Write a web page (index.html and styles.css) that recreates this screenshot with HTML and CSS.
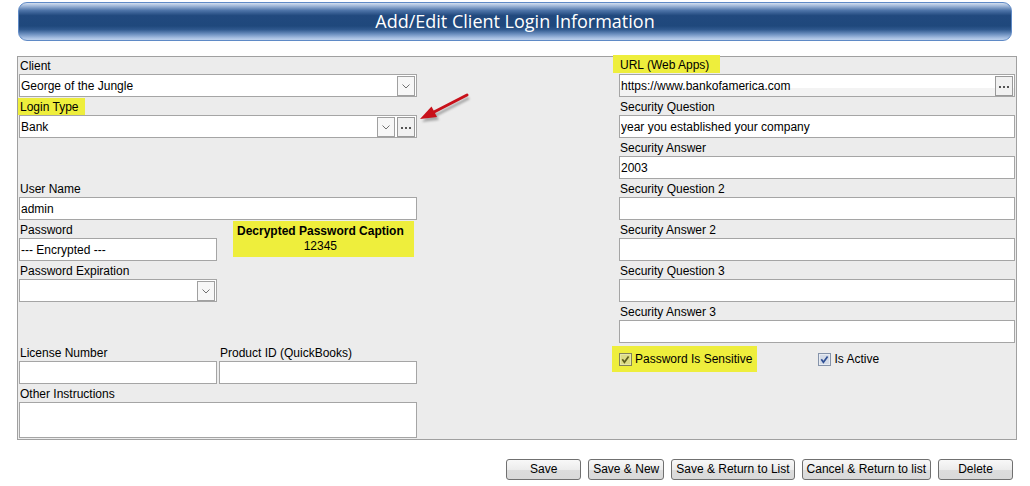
FILE: index.html
```html
<!DOCTYPE html>
<html>
<head>
<meta charset="utf-8">
<title>Add/Edit Client Login Information</title>
<link rel="stylesheet" href="styles.css">
</head>
<body>
<div class="header"><h1 class="title">Add/Edit Client Login Information</h1></div>
<div class="panel">
  <div class="col">
    <div class="field">
      <div class="label">Client</div>
      <div class="box"><span class="val">George of the Jungle</span><span class="dd"><svg width="16" height="18" viewBox="0 0 16 18"><path d="M4.5 7.5 L8 11 L11.5 7.5" fill="none" stroke="#707070" stroke-width="1"/></svg></span></div>
    </div>
    <div class="field">
      <div class="label hl-row"><span class="hl hl-login">Login Type</span></div>
      <div class="box"><span class="val">Bank</span><span class="dd"><svg width="16" height="18" viewBox="0 0 16 18"><path d="M4.5 7.5 L8 11 L11.5 7.5" fill="none" stroke="#707070" stroke-width="1"/></svg></span><span class="ell"><svg width="16" height="18" viewBox="0 0 16 18"><rect x="3" y="9" width="2" height="2" fill="#555"/><rect x="7" y="9" width="2" height="2" fill="#555"/><rect x="11" y="9" width="2" height="2" fill="#555"/></svg></span></div>
    </div>
    <div class="field"></div>
    <div class="field">
      <div class="label">User Name</div>
      <div class="box"><span class="val">admin</span></div>
    </div>
    <div class="field split">
      <div class="half">
        <div class="label">Password</div>
        <div class="box"><span class="val">--- Encrypted ---</span></div>
      </div>
      <div class="caption">
        <div class="cap-inner"><div class="cap-title">Decrypted Password Caption</div><div>12345</div></div>
      </div>
    </div>
    <div class="field split">
      <div class="half">
        <div class="label">Password Expiration</div>
        <div class="box"><span class="val"></span><span class="dd"><svg width="16" height="18" viewBox="0 0 16 18"><path d="M4.5 7.5 L8 11 L11.5 7.5" fill="none" stroke="#707070" stroke-width="1"/></svg></span></div>
      </div>
    </div>
    <div class="field"></div>
    <div class="field split gap2">
      <div class="half">
        <div class="label">License Number</div>
        <div class="box"></div>
      </div>
      <div class="half">
        <div class="label">Product ID (QuickBooks)</div>
        <div class="box"></div>
      </div>
    </div>
    <div class="field tall">
      <div class="label">Other Instructions</div>
      <div class="box area"></div>
    </div>
  </div>

  <div class="col">
    <div class="field">
      <div class="label hl-row"><span class="hl hl-url">URL (Web Apps)</span></div>
      <div class="box url"><span class="val">https://www.bankofamerica.com</span><span class="ell"><svg width="16" height="18" viewBox="0 0 16 18"><rect x="3" y="9" width="2" height="2" fill="#555"/><rect x="7" y="9" width="2" height="2" fill="#555"/><rect x="11" y="9" width="2" height="2" fill="#555"/></svg></span></div>
    </div>
    <div class="field">
      <div class="label">Security Question</div>
      <div class="box"><span class="val">year you established your company</span></div>
    </div>
    <div class="field">
      <div class="label">Security Answer</div>
      <div class="box"><span class="val">2003</span></div>
    </div>
    <div class="field">
      <div class="label">Security Question 2</div>
      <div class="box"></div>
    </div>
    <div class="field">
      <div class="label">Security Answer 2</div>
      <div class="box"></div>
    </div>
    <div class="field">
      <div class="label">Security Question 3</div>
      <div class="box"></div>
    </div>
    <div class="field">
      <div class="label">Security Answer 3</div>
      <div class="box"></div>
    </div>
    <div class="checks">
      <span class="check hl-check">
        <svg width="13" height="13" viewBox="0 0 13 13"><rect x="0.5" y="0.5" width="12" height="12" fill="#e6e6a6" stroke="#82825a"/><rect x="2" y="2" width="9" height="9" fill="#dcdc86"/><path d="M3.3 6.3 L5.4 9.2 L9.6 3.4" fill="none" stroke="#5c5c1e" stroke-width="1.7"/></svg>
        <span>Password Is Sensitive</span>
      </span>
      <span class="check active">
        <svg width="13" height="13" viewBox="0 0 13 13"><rect x="0.5" y="0.5" width="12" height="12" fill="#e7ebf2" stroke="#8593aa"/><rect x="2" y="2" width="9" height="9" fill="#d4dbe7"/><path d="M3.3 6.3 L5.4 9.2 L9.6 3.4" fill="none" stroke="#2f4f94" stroke-width="1.7"/></svg>
        <span>Is Active</span>
      </span>
    </div>
  </div>

  <svg class="arrow" width="75" height="45" viewBox="0 0 75 45">
    <defs><filter id="blur" x="-20%" y="-20%" width="140%" height="140%"><feGaussianBlur stdDeviation="1.2"/></filter></defs>
    <g filter="url(#blur)" opacity="0.45" transform="translate(2,3)">
      <path d="M49 8 L16 25" stroke="#555" stroke-width="3" fill="none"/>
      <path d="M2 32 L19 30 L13.5 19.4 Z" fill="#555"/>
    </g>
    <path d="M49 8 L16 25" stroke="#c8101a" stroke-width="3" stroke-linecap="round" fill="none"/>
    <path d="M2 32 L19 30 L13.5 19.4 Z" fill="#c8101a"/>
  </svg>
</div>
<div class="buttons">
  <button class="btn">Save</button>
  <button class="btn">Save &amp; New</button>
  <button class="btn">Save &amp; Return to List</button>
  <button class="btn">Cancel &amp; Return to list</button>
  <button class="btn">Delete</button>
</div>
</body>
</html>
```
FILE: styles.css
```css
* { box-sizing: border-box; }
html, body { margin: 0; padding: 0; background: #fff; }
body {
  width: 1030px;
  height: 486px;
  overflow: hidden;
  font-family: "Liberation Sans", Arial, sans-serif;
  font-size: 12px;
  color: #000;
}

.header {
  margin: 2px 0 0 18px;
  width: 994px;
  height: 39px;
  border: 1px solid #5f8ac6;
  border-radius: 9px;
  background: linear-gradient(to bottom,
    #d3dfef 0%, #9fb7d8 8%, #4e74a8 20%, #21497e 34%,
    #1f487c 62%, #30598e 72%, #6c8fbf 84%, #a9c1e3 95%, #bcd0ec 100%);
  display: flex;
  align-items: center;
  justify-content: center;
}
.title {
  margin: -2px 0 0 0;
  font-family: "Open Sans", "Liberation Sans", sans-serif;
  font-weight: normal;
  font-size: 18px;
  color: #fff;
  line-height: 1;
}

.panel {
  position: relative;
  margin: 15px 0 0 17px;
  width: 1000px;
  height: 384px;
  border: 1px solid #a0a0a0;
  background: #ececec;
  padding-left: 1px;
  display: grid;
  grid-template-columns: 398px 396px;
  column-gap: 202px;
  align-content: start;
}
.col { display: flex; flex-direction: column; }
.field { height: 41px; }
.field.tall { height: 53px; }
.split { display: flex; align-items: flex-start; }
.gap2 { gap: 2px; }
.half { width: 198px; }

.label {
  height: 17px;
  line-height: 17px;
  padding: 1px 0 0 1px;
  white-space: nowrap;
}
.label.hl-row { padding-top: 0; }
.hl { background: #eeee3c; display: inline-block; }
.hl-login { margin-left: -2px; padding: 0 6px 0 2px; height: 17px; line-height: 18px; }
.hl-url { margin-left: -7px; margin-top: -2px; padding: 0 11px 0 7px; height: 18px; line-height: 20px; }

.box {
  height: 23px;
  background: #fff;
  border: 1px solid #a5a5a5;
  display: flex;
  align-items: center;
  padding-left: 1px;
}
.box.area { height: 36px; }
.box.url { background: linear-gradient(to bottom, #fff 0%, #fff 62%, #f3f3f3 63%, #f3f3f3 100%); }
.val { flex: 1; white-space: nowrap; overflow: hidden; }
.dd, .ell {
  width: 18px;
  height: 20px;
  border: 1px solid #a0a0a0;
  background: #f7f7f7;
  display: flex;
  align-items: center;
  justify-content: center;
  margin-right: 1px;
}
.dd + .ell { margin-left: 1px; }
.ell { background: #f1f1f1; border-color: #999; }

.caption {
  margin-left: 16px;
  width: 181px;
  height: 36px;
  background: #eeee3c;
  padding: 3px 0 0 4px;
}
.cap-inner { display: inline-block; text-align: center; line-height: 15px; }
.cap-title { font-weight: bold; }

.checks { display: flex; align-items: center; height: 28px; margin-top: 1px; }
.check { display: inline-flex; align-items: center; gap: 3px; white-space: nowrap; }
.hl-check { background: #eeee3c; height: 26px; margin-left: -7px; padding: 0 5px 0 7px; }
.active { margin-left: 61px; }

.arrow { position: absolute; left: 400px; top: 30px; }

.buttons {
  margin-top: 19px;
  padding-right: 17px;
  display: flex;
  justify-content: flex-end;
  gap: 7px;
}
.btn {
  height: 21px;
  min-width: 75px;
  padding: 0 4px;
  border: 1px solid #707070;
  border-radius: 3px;
  background: linear-gradient(to bottom, #f8f8f8 0%, #ececec 50%, #dddddd 51%, #d9d9d9 100%);
  font-family: "Liberation Sans", Arial, sans-serif;
  font-size: 12px;
  color: #000;
  line-height: 19px;
}
```
